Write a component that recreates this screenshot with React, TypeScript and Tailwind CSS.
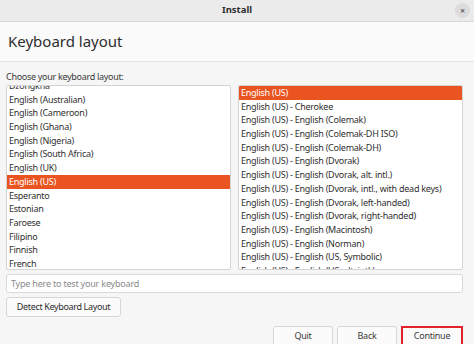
import React from 'react';

const leftItems = [
  'Dzongkha',
  'English (Australian)',
  'English (Cameroon)',
  'English (Ghana)',
  'English (Nigeria)',
  'English (South Africa)',
  'English (UK)',
  'English (US)',
  'Esperanto',
  'Estonian',
  'Faroese',
  'Filipino',
  'Finnish',
  'French',
  'Friulian',
];

const rightItems = [
  'English (US)',
  'English (US) - Cherokee',
  'English (US) - English (Colemak)',
  'English (US) - English (Colemak-DH ISO)',
  'English (US) - English (Colemak-DH)',
  'English (US) - English (Dvorak)',
  'English (US) - English (Dvorak, alt. intl.)',
  'English (US) - English (Dvorak, intl., with dead keys)',
  'English (US) - English (Dvorak, left-handed)',
  'English (US) - English (Dvorak, right-handed)',
  'English (US) - English (Macintosh)',
  'English (US) - English (Norman)',
  'English (US) - English (US, Symbolic)',
  'English (US) - English (US, alt. intl.)',
];

interface ListProps {
  items: string[];
  selected: string;
  offset: string;
}

const LayoutList: React.FC<ListProps> = ({ items, selected, offset }) => {
  return (
    <div className="h-[185px] overflow-hidden bg-white border border-[#d4d4d4] rounded-[2px]">
      <div className={offset}>
        {items.map((item) => (
          <div
            key={item}
            className={
              item === selected
                ? 'h-[13.7px] leading-[13.7px] px-[2px] bg-[#e95420] text-white whitespace-nowrap'
                : 'h-[13.7px] leading-[13.7px] px-[2px] text-[#303030] whitespace-nowrap'
            }
          >
            {item}
          </div>
        ))}
      </div>
    </div>
  );
};

export default function App() {
  return (
    <div className="w-[474px] h-[344px] overflow-hidden flex flex-col bg-[#f6f6f6] font-['Noto_Sans',sans-serif] text-[#303030] tracking-[-0.25px]">
      <div className="relative h-[22px] shrink-0 bg-[#ebebeb] border-b border-[#d8d8d8] flex items-center justify-center">
        <span className="text-[9.5px] font-bold text-[#2e2e2e] tracking-normal">Install</span>
        <div className="absolute right-[4px] top-[3px] w-[15px] h-[15px] rounded-full bg-[#dcdcdc] flex items-center justify-center text-[9px] leading-none text-[#444]">
          ×
        </div>
      </div>

      <div className="h-[40px] shrink-0 bg-[#fafafa] border-b border-[#e4e4e4] px-[8px] flex items-center">
        <span className="text-[15px] text-[#2e2e2e] tracking-normal">Keyboard layout</span>
      </div>

      <div className="flex flex-col px-[6px] pr-[11px] pt-[8px]">
        <div className="h-[14px] leading-[14px] text-[9px] tracking-[-0.3px] text-[#3a3a3a]">Choose your keyboard layout:</div>

        <div className="mt-[1px] grid grid-cols-2 gap-[7px] text-[9px]">
          <LayoutList items={leftItems} selected="English (US)" offset="-mt-[7px]" />
          <LayoutList items={rightItems} selected="English (US)" offset="mt-0" />
        </div>

        <div className="mt-[4px] h-[19px] bg-white border border-[#dadada] rounded-[3px] flex items-center px-[4px]">
          <span className="text-[9px] tracking-[-0.2px] text-[#8a8a8a]">Type here to test your keyboard</span>
        </div>

        <div className="mt-[4px] flex">
          <div className="h-[20px] w-[115px] bg-[#fbfbfb] border border-[#d6d6d6] rounded-[3px] flex items-center justify-center text-[9px] tracking-[-0.35px] text-[#2e2e2e]">
            Detect Keyboard Layout
          </div>
        </div>

        <div className="mt-[9px] flex justify-end gap-[4px]">
          <div className="h-[20px] w-[60px] bg-[#fbfbfb] border border-[#d6d6d6] rounded-[3px] flex items-center justify-center text-[9px] text-[#3a3a3a]">
            Quit
          </div>
          <div className="h-[20px] w-[60px] bg-[#fbfbfb] border border-[#d6d6d6] rounded-[3px] flex items-center justify-center text-[9px] text-[#3a3a3a]">
            Back
          </div>
          <div className="h-[20px] w-[62px] bg-[#fbfbfb] border-2 border-[#e0232b] flex items-center justify-center text-[9px] text-[#3a3a3a]">
            Continue
          </div>
        </div>
      </div>
    </div>
  );
}
